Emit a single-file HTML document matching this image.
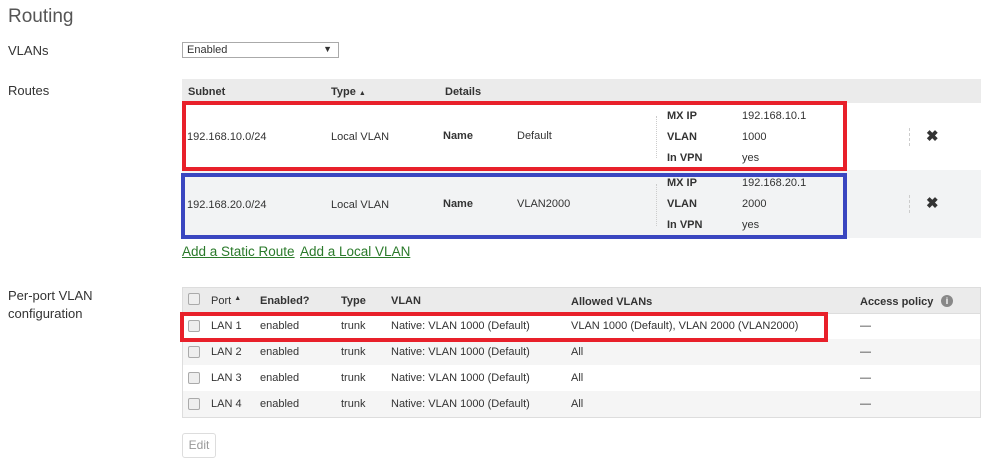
<!DOCTYPE html>
<html><head><meta charset="utf-8"><style>
*{margin:0;padding:0;box-sizing:border-box}
body{width:988px;height:470px;background:#fff;font-family:"Liberation Sans",Arial,sans-serif;font-size:11px;color:#333;position:relative;overflow:hidden}
.a{position:absolute;white-space:nowrap}
.b{font-weight:bold}
.lbl{font-size:13px;color:#333}
</style></head><body>
<div class="a" style="left:8px;top:6px;font-size:19px;color:#555">Routing</div>
<div class="a lbl" style="left:8px;top:43px">VLANs</div>
<div class="a" style="left:182px;top:42px;width:157px;height:16px;border:1px solid #aaa;background:#fff;font-size:11px;padding:1px 4px">Enabled<span style="position:absolute;right:6px;top:1px;font-size:9px">▼</span></div>
<div class="a lbl" style="left:8px;top:83px">Routes</div>

<div class="a" style="left:182px;top:79px;width:799px;height:24px;background:#ebebeb"></div>
<div class="a b" style="left:188px;top:86px">Subnet</div>
<div class="a b" style="left:331px;top:86px">Type <span style="font-size:7px">▲</span></div>
<div class="a b" style="left:445px;top:86px">Details</div>
<div class="a" style="left:182px;top:170px;width:799px;height:68px;background:#f2f3f4"></div>

<div class="a" style="left:187px;top:131px">192.168.10.0/24</div>
<div class="a" style="left:331px;top:131px">Local VLAN</div>
<div class="a b" style="left:443px;top:130px">Name</div>
<div class="a" style="left:517px;top:130px">Default</div>
<div class="a" style="left:656px;top:116px;height:42px;border-left:1px dotted #ccc"></div>
<div class="a b" style="left:667px;top:110px">MX IP</div><div class="a" style="left:742px;top:110px">192.168.10.1</div>
<div class="a b" style="left:667px;top:131px">VLAN</div><div class="a" style="left:742px;top:131px">1000</div>
<div class="a b" style="left:667px;top:152px">In VPN</div><div class="a" style="left:742px;top:152px">yes</div>
<div class="a" style="left:909px;top:128px;height:18px;border-left:1px dashed #ccc"></div>
<div class="a b" style="left:926px;top:127px;font-size:15px;color:#333">✖</div>

<div class="a" style="left:187px;top:199px">192.168.20.0/24</div>
<div class="a" style="left:331px;top:199px">Local VLAN</div>
<div class="a b" style="left:443px;top:198px">Name</div>
<div class="a" style="left:517px;top:198px">VLAN2000</div>
<div class="a" style="left:656px;top:184px;height:42px;border-left:1px dotted #ccc"></div>
<div class="a b" style="left:667px;top:177px">MX IP</div><div class="a" style="left:742px;top:177px">192.168.20.1</div>
<div class="a b" style="left:667px;top:198px">VLAN</div><div class="a" style="left:742px;top:198px">2000</div>
<div class="a b" style="left:667px;top:219px">In VPN</div><div class="a" style="left:742px;top:219px">yes</div>
<div class="a" style="left:909px;top:195px;height:18px;border-left:1px dashed #ccc"></div>
<div class="a b" style="left:926px;top:194px;font-size:15px;color:#333">✖</div>

<div class="a" style="left:182px;top:101px;width:665px;height:70px;border:4px solid #e8202a"></div>
<div class="a" style="left:181px;top:173px;width:666px;height:66px;border:4px solid #3a46c0"></div>

<div class="a" style="left:182px;top:244px;font-size:13.5px;color:#2a7a2a;text-decoration:underline">Add a Static Route</div>
<div class="a" style="left:300px;top:244px;font-size:13.5px;color:#2a7a2a;text-decoration:underline">Add a Local VLAN</div>

<div class="a lbl" style="left:8px;top:287px;line-height:18px">Per-port VLAN<br>configuration</div>

<div class="a" style="left:182px;top:287px;width:799px;height:131px;border:1px solid #ddd"></div>
<div class="a" style="left:183px;top:288px;width:797px;height:25px;background:#ebebeb"></div>
<div class="a" style="left:183px;top:339px;width:797px;height:26px;background:#f5f5f5"></div>
<div class="a" style="left:183px;top:391px;width:797px;height:26px;background:#f5f5f5"></div>
<div class="a" style="left:183px;top:313px;width:797px;border-top:1px solid #ddd"></div>

<div class="a" style="left:211px;top:295px">Port <span style="font-size:7px;vertical-align:top">▲</span></div>
<div class="a b" style="left:260px;top:295px">Enabled?</div>
<div class="a b" style="left:341px;top:295px">Type</div>
<div class="a b" style="left:391px;top:295px">VLAN</div>
<div class="a b" style="left:571px;top:296px">Allowed VLANs</div>
<div class="a b" style="left:860px;top:296px">Access policy</div>
<div class="a" style="left:941px;top:295px;width:12px;height:12px;border-radius:50%;background:#888;color:#fff;font-size:9px;font-weight:bold;text-align:center;line-height:12px">i</div>

<div class="a" style="left:188px;top:293px;width:12px;height:12px;border:1px solid #aaa;border-radius:2px;background:#eee"></div>
<div class="a" style="left:188px;top:320px;width:12px;height:12px;border:1px solid #aaa;border-radius:2px;background:#eee"></div>
<div class="a" style="left:188px;top:346px;width:12px;height:12px;border:1px solid #aaa;border-radius:2px;background:#eee"></div>
<div class="a" style="left:188px;top:372px;width:12px;height:12px;border:1px solid #aaa;border-radius:2px;background:#eee"></div>
<div class="a" style="left:188px;top:398px;width:12px;height:12px;border:1px solid #aaa;border-radius:2px;background:#eee"></div>

<div class="a" style="left:211px;top:320px">LAN 1</div><div class="a" style="left:260px;top:320px">enabled</div><div class="a" style="left:341px;top:320px">trunk</div><div class="a" style="left:391px;top:320px">Native: VLAN 1000 (Default)</div><div class="a" style="left:571px;top:320px">VLAN 1000 (Default), VLAN 2000 (VLAN2000)</div><div class="a" style="left:860px;top:320px">—</div>
<div class="a" style="left:211px;top:346px">LAN 2</div><div class="a" style="left:260px;top:346px">enabled</div><div class="a" style="left:341px;top:346px">trunk</div><div class="a" style="left:391px;top:346px">Native: VLAN 1000 (Default)</div><div class="a" style="left:571px;top:346px">All</div><div class="a" style="left:860px;top:346px">—</div>
<div class="a" style="left:211px;top:372px">LAN 3</div><div class="a" style="left:260px;top:372px">enabled</div><div class="a" style="left:341px;top:372px">trunk</div><div class="a" style="left:391px;top:372px">Native: VLAN 1000 (Default)</div><div class="a" style="left:571px;top:372px">All</div><div class="a" style="left:860px;top:372px">—</div>
<div class="a" style="left:211px;top:398px">LAN 4</div><div class="a" style="left:260px;top:398px">enabled</div><div class="a" style="left:341px;top:398px">trunk</div><div class="a" style="left:391px;top:398px">Native: VLAN 1000 (Default)</div><div class="a" style="left:571px;top:398px">All</div><div class="a" style="left:860px;top:398px">—</div>

<div class="a" style="left:180px;top:312px;width:648px;height:30px;border:4px solid #e8202a"></div>

<div class="a" style="left:182px;top:433px;width:34px;height:25px;border:1px solid #ddd;border-radius:3px;color:#999;font-size:12px;text-align:center;line-height:23px">Edit</div>
</body></html>
